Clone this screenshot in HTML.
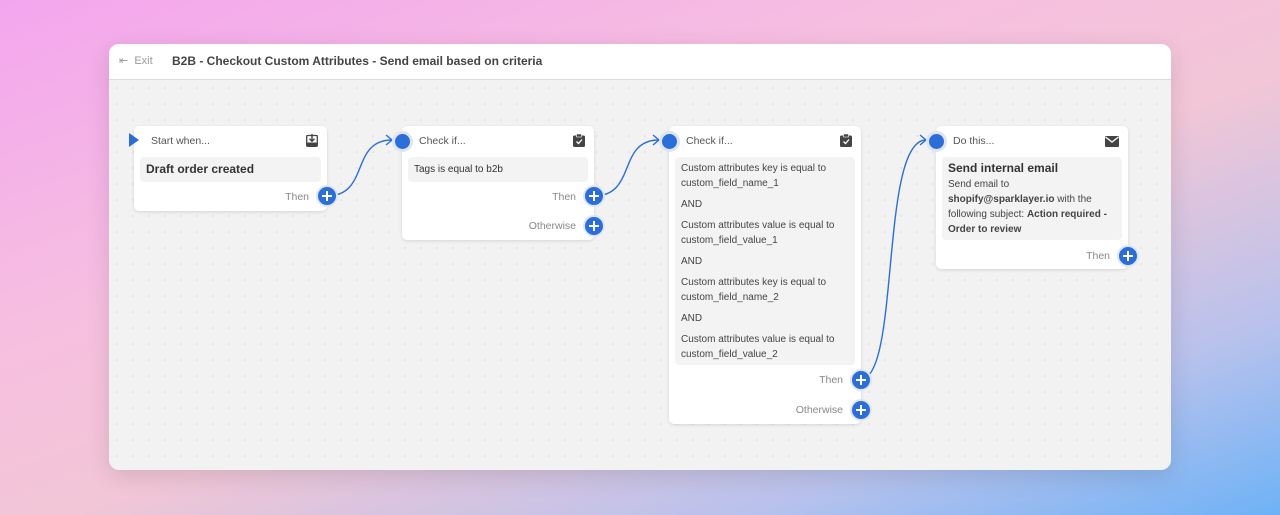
<!DOCTYPE html>
<html><head><style>
*{margin:0;padding:0;box-sizing:border-box}
body{width:1280px;height:515px;overflow:hidden;font-family:"Liberation Sans",sans-serif;
background:linear-gradient(160deg,#f3a6ee 0%,#f6bfe0 35%,#f2c6d6 55%,#b9c2ec 80%,#6eb2f6 100%);position:relative}
.win{position:absolute;left:109px;top:44px;width:1062px;height:426px;border-radius:10px;overflow:hidden;background:#f2f2f2;box-shadow:0 6px 24px rgba(0,0,0,.12)}
.hdr{height:36px;background:#fff;border-bottom:1px solid #ddd;position:relative}
.exit{position:absolute;left:10px;top:10px;font-size:11px;color:#999}
.title{position:absolute;left:63px;top:10px;font-size:12px;font-weight:bold;color:#444}
.canvas{position:absolute;top:36px;left:0;right:0;bottom:0;background-image:radial-gradient(#dcdcdc 0.7px,transparent 1px);background-size:16px 16px}
.card{position:absolute;background:#fff;border-radius:5px;box-shadow:0 1px 3px rgba(0,0,0,.12)}
.ch{position:absolute;left:17px;top:9px;font-size:10.5px;color:#555}
.box{position:absolute;left:6px;right:6px;top:31px;background:#f3f3f3;border-radius:4px;font-size:10px;color:#333;padding:6px 6px;line-height:15px}
.lbl{position:absolute;right:18px;font-size:10.5px;color:#888}
.plus{position:absolute;width:18px;height:18px;border-radius:50%;background:#2c6ed8;border:2px solid #dfe5ef;box-sizing:content-box;margin:-11px 0 0 -11px}
.plus:before,.plus:after{content:"";position:absolute;background:#fff;left:4px;top:8px;width:10px;height:2px}
.plus:after{left:8px;top:4px;width:2px;height:10px}
.dot{position:absolute;width:15px;height:15px;border-radius:50%;background:#2c6ed8;border:3px solid #dfe5ef;box-sizing:content-box;margin:-10px 0 0 -10px}
.ico{position:absolute;right:9px;top:8px;width:12px;height:13px}
</style></head><body>
<div class="win">
<div class="hdr"><div class="exit">⇤&nbsp; Exit</div><div class="title">B2B - Checkout Custom Attributes - Send email based on criteria</div></div>
<div class="canvas"></div>
</div>
<div class="card" style="left:134px;top:126px;width:193px;height:85px">
<div class="ch">Start when...</div>
<svg class="ico" viewBox="0 0 12 13"><rect x="0.7" y="1.5" width="10.6" height="10.8" rx="1" fill="none" stroke="#444" stroke-width="1.3"/><path d="M6 0v7M3.5 4.8L6 7.3 8.5 4.8" stroke="#444" stroke-width="1.4" fill="none"/><rect x="1" y="8.5" width="10" height="3.5" fill="#444"/></svg>
<div class="box" style="font-size:12px;font-weight:bold;height:25px;padding:5px 6px">Draft order created</div>
<div class="lbl" style="top:65px">Then</div>
</div>
<div class="card" style="left:402px;top:126px;width:192px;height:114px">
<div class="ch">Check if...</div>
<svg class="ico" viewBox="0 0 12 13"><rect x="0" y="1.5" width="12" height="11.5" rx="1.5" fill="#444"/><rect x="3.5" y="0" width="5" height="3" fill="#444" stroke="#fff" stroke-width=".6"/><path d="M3.5 7.5l2 2 3.5-4" stroke="#fff" stroke-width="1.3" fill="none"/></svg>
<div class="box" style="height:25px;padding:5px 6px">Tags is equal to b2b</div>
<div class="lbl" style="top:65px">Then</div><div class="lbl" style="top:94px">Otherwise</div>
</div>
<div class="card" style="left:669px;top:126px;width:192px;height:298px">
<div class="ch">Check if...</div>
<svg class="ico" viewBox="0 0 12 13"><rect x="0" y="1.5" width="12" height="11.5" rx="1.5" fill="#444"/><rect x="3.5" y="0" width="5" height="3" fill="#444" stroke="#fff" stroke-width=".6"/><path d="M3.5 7.5l2 2 3.5-4" stroke="#fff" stroke-width="1.3" fill="none"/></svg>
<div class="box" style="height:208px;padding:4px 6px;color:#444">Custom attributes key is equal to<br>custom_field_name_1<div style="margin:6px 0 6px">AND</div>Custom attributes value is equal to<br>custom_field_value_1<div style="margin:6px 0 6px">AND</div>Custom attributes key is equal to<br>custom_field_name_2<div style="margin:6px 0 6px">AND</div>Custom attributes value is equal to<br>custom_field_value_2</div>
<div class="lbl" style="top:248px">Then</div><div class="lbl" style="top:278px">Otherwise</div>
</div>
<div class="card" style="left:936px;top:126px;width:192px;height:143px">
<div class="ch">Do this...</div>
<svg class="ico" viewBox="0 0 14 11" style="width:14px;height:11px;top:10px"><rect width="14" height="11" rx="1" fill="#444"/><path d="M0.5 1l6.5 5 6.5-5" stroke="#fff" stroke-width="1.3" fill="none"/></svg>
<div class="box" style="height:83px;padding:4px 6px;color:#444"><b style="font-size:12px;color:#333">Send internal email</b><br>Send email to<br><b>shopify@sparklayer.io</b> with the following subject: <b>Action required - Order to review</b></div>
<div class="lbl" style="top:124px">Then</div>
</div>
<svg style="position:absolute;left:0;top:0" width="1280" height="515">
<g fill="none" stroke="#2c6ed8" stroke-width="1.4">
<path d="M327 196C370 196 350 140 392 140"/><path d="M386 135l6 5-6 5"/>
<path d="M594 196C637 196 617 140 659 140"/><path d="M653 135l6 5-6 5"/>
<path d="M861 379C900 379 880 140 926 140"/><path d="M920 135l6 5-6 5"/>
</g></svg>
<div style="position:absolute;left:129px;top:133px;width:0;height:0;border-left:10px solid #2c6ed8;border-top:7px solid transparent;border-bottom:7px solid transparent"></div>
<div class="dot" style="left:402px;top:141px"></div>
<div class="dot" style="left:669px;top:141px"></div>
<div class="dot" style="left:936px;top:141px"></div>
<div class="plus" style="left:327px;top:196px"></div>
<div class="plus" style="left:594px;top:196px"></div>
<div class="plus" style="left:594px;top:226px"></div>
<div class="plus" style="left:861px;top:380px"></div>
<div class="plus" style="left:861px;top:410px"></div>
<div class="plus" style="left:1128px;top:256px"></div>
</body></html>
